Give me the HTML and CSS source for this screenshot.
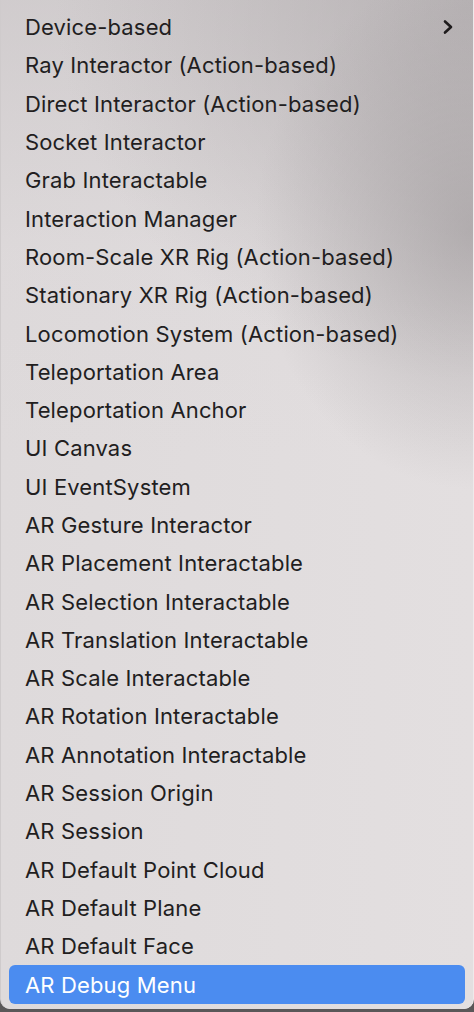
FILE: index.html
```html
<!DOCTYPE html>
<html lang="en">
<head>
    <meta charset="UTF-8">
    <meta name="viewport" content="width=device-width, initial-scale=1.0">
    <title>GameObject Menu</title>
    <link rel="stylesheet" href="styles.css">
</head>
<body>
    <div class="menu">
        <div class="item has-sub">
            <span>Device-based</span>
            <svg class="chevron" width="12" height="16" viewBox="0 0 12 16">
                <path d="M3 2.5 L9 8 L3 13.5" fill="none" stroke="#1e1b1c" stroke-width="2.6" stroke-linecap="round" stroke-linejoin="round"/>
            </svg>
        </div>
        <div class="item">Ray Interactor (Action-based)</div>
        <div class="item">Direct Interactor (Action-based)</div>
        <div class="item">Socket Interactor</div>
        <div class="item">Grab Interactable</div>
        <div class="item">Interaction Manager</div>
        <div class="item">Room-Scale XR Rig (Action-based)</div>
        <div class="item">Stationary XR Rig (Action-based)</div>
        <div class="item">Locomotion System (Action-based)</div>
        <div class="item">Teleportation Area</div>
        <div class="item">Teleportation Anchor</div>
        <div class="item">UI Canvas</div>
        <div class="item">UI EventSystem</div>
        <div class="item">AR Gesture Interactor</div>
        <div class="item">AR Placement Interactable</div>
        <div class="item">AR Selection Interactable</div>
        <div class="item">AR Translation Interactable</div>
        <div class="item">AR Scale Interactable</div>
        <div class="item">AR Rotation Interactable</div>
        <div class="item">AR Annotation Interactable</div>
        <div class="item">AR Session Origin</div>
        <div class="item">AR Session</div>
        <div class="item">AR Default Point Cloud</div>
        <div class="item">AR Default Plane</div>
        <div class="item">AR Default Face</div>
        <div class="item active">AR Debug Menu</div>
    </div>
</body>
</html>
```

FILE: styles.css
```css
* {
    margin: 0;
    padding: 0;
    box-sizing: border-box;
}

body {
    width: 474px;
    height: 1012px;
    overflow: hidden;
    background-color: #5a5758;
    font-family: Inter, "Noto Sans", sans-serif;
}

.menu {
    height: 1009px;
    padding: 8px 8px 0;
    border-radius: 0 0 10px 10px;
    background-color: #e3dfe0;
    background-image:
        radial-gradient(ellipse 220px 260px at 474px 230px, rgba(150, 145, 147, 0.55), rgba(150, 145, 147, 0) 100%),
        radial-gradient(ellipse 420px 380px at 474px 0px, rgba(165, 160, 162, 0.6), rgba(165, 160, 162, 0) 100%),
        linear-gradient(to bottom, rgba(195, 190, 192, 0.5) 0%, rgba(215, 210, 212, 0.2) 25%, rgba(227, 223, 224, 0) 45%),
        linear-gradient(to right, #dedadb 0%, #e3dfe0 100%);
    border-left: 1px solid #cfcbcc;
    border-right: 1px solid #eeeaeb;
}

.item {
    height: 38.3px;
    display: flex;
    align-items: center;
    justify-content: space-between;
    padding: 0 11px 0 16px;
    border-radius: 6px;
    color: #221e1f;
    font-size: 22px;
    letter-spacing: 0.15px;
    white-space: nowrap;
}

.active {
    background-color: #4b8cf0;
    color: #ffffff;
}
```
